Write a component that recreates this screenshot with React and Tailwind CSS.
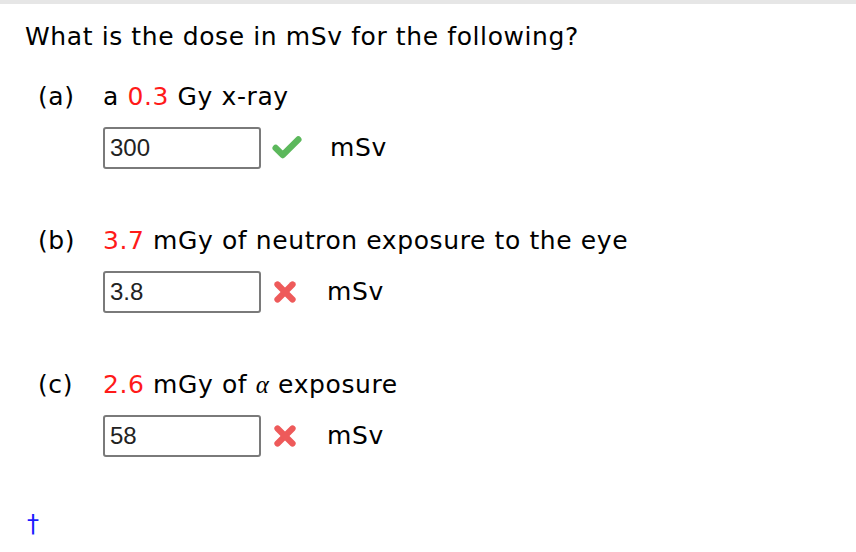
import { Check, X } from 'lucide-react'

function Answer({ value, ok }) {
  return (
    <div className="flex items-center mt-[15px] ml-[78px]">
      <div className="w-[158px] h-[42px] border-2 border-[#7a7a7a] rounded-[3px] flex items-center pl-[5px] text-[24px] text-[#222]"
        style={{ fontFamily: '"Liberation Sans", Arial, sans-serif' }}>
        {value}
      </div>
      {ok ? (
        <div className="w-[69px] flex justify-start pl-[9px]">
          <Check size={34} strokeWidth={4.5} className="text-[#5cb85c]" />
        </div>
      ) : (
        <div className="w-[66px] flex justify-start pl-[9px]">
          <X size={30} strokeWidth={5} className="text-[#ee5a5a]" />
        </div>
      )}
      <span className="text-[25px] tracking-[0.6px]">mSv</span>
    </div>
  )
}

function Part({ label, children, value, ok }) {
  return (
    <div>
      <div className="flex items-center text-[25px] h-[30px] tracking-[0.6px]">
        <span className="w-[78px] pl-[13px]">{label}</span>
        <span>{children}</span>
      </div>
      <Answer value={value} ok={ok} />
    </div>
  )
}

export default function App() {
  return (
    <div className="w-[856px] h-[552px] bg-white text-black overflow-hidden"
      style={{ fontFamily: '"DejaVu Sans", Verdana, sans-serif' }}>
      <div className="h-[4px] bg-[#e6e6e6]" />
      <div className="pl-[25px]">
        <h1 className="text-[25px] mt-[14px] h-[34px] tracking-[0.6px]">What is the dose in mSv for the following?</h1>
        <div className="mt-[30px] flex flex-col gap-[57px]">
          <Part label="(a)" value="300" ok>
            a <span className="text-[#ff1a1a]">0.3</span> Gy x-ray
          </Part>
          <Part label="(b)" value="3.8">
            <span className="text-[#ff1a1a]">3.7</span> mGy of neutron exposure to the eye
          </Part>
          <Part label="(c)" value="58">
            <span className="text-[#ff1a1a]">2.6</span> mGy of <i style={{ fontFamily: '"Liberation Serif", serif' }}>α</i> exposure
          </Part>
        </div>
        <div className="mt-[52px] text-[24px] leading-[30px] text-[#1a1aff] pl-[2px]">†</div>
      </div>
    </div>
  )
}
